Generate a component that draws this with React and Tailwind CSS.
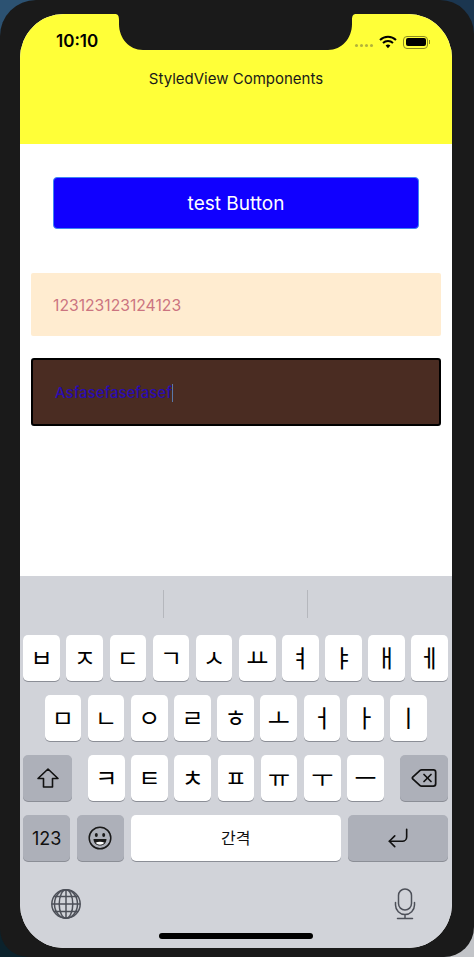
import { Delete, CornerDownLeft } from "lucide-react";

const row1 = ["ㅂ", "ㅈ", "ㄷ", "ㄱ", "ㅅ", "ㅛ", "ㅕ", "ㅑ", "ㅐ", "ㅔ"];
const row2 = ["ㅁ", "ㄴ", "ㅇ", "ㄹ", "ㅎ", "ㅗ", "ㅓ", "ㅏ", "ㅣ"];
const row3 = ["ㅋ", "ㅌ", "ㅊ", "ㅍ", "ㅠ", "ㅜ", "ㅡ"];

function Key({ label }) {
  return (
    <div className="w-[36.7px] h-[46px] flex items-center justify-center pb-[3px] bg-white rounded-[5px] shadow-[0_1px_0_#8b8e96] text-[24px] text-black">
      {label}
    </div>
  );
}

function GrayKey({ className, children }) {
  return (
    <div className={`h-[46px] flex items-center justify-center bg-[#adb0b9] rounded-[5px] shadow-[0_1px_0_#8b8e96] text-[#111] ${className}`}>
      {children}
    </div>
  );
}

function StatusIcons() {
  return (
    <div className="flex items-center">
      <div className="flex gap-[2px] mt-[6px] mr-[6px]">
        {[0, 1, 2, 3].map((i) => (
          <div key={i} className="w-[3px] h-[3px] rounded-full bg-[#b3b33a]" />
        ))}
      </div>
      <svg width="18" height="14" viewBox="0 0 18 14" className="mr-[6px]">
        <path d="M1 5a11.500 11.500 0 0 1 16 0" fill="none" stroke="#000" strokeWidth="2" />
        <path d="M4 8a7.200 7.200 0 0 1 10 0" fill="none" stroke="#000" strokeWidth="2" />
        <path d="M6.600 10.600a3.400 3.400 0 0 1 4.800 0L9 13.200z" fill="#000" />
      </svg>
      <div className="w-[25px] h-[13px] rounded-[4px] border border-[#8a8a20] p-[1.5px]">
        <div className="w-full h-full rounded-[2px] bg-black" />
      </div>
      <div className="w-[1px] h-[4px] ml-[1px] bg-[#8a8a20]" />
    </div>
  );
}

function EmojiIcon() {
  return (
    <svg width="24" height="24" viewBox="0 0 24 24">
      <circle cx="12" cy="12" r="10.800" fill="none" stroke="#1a1a1a" strokeWidth="1.500" />
      <ellipse cx="8.300" cy="9" rx="1.500" ry="2" fill="#1a1a1a" />
      <ellipse cx="15.700" cy="9" rx="1.500" ry="2" fill="#1a1a1a" />
      <path d="M5.500 13h13c0 3.800-2.800 6.500-6.500 6.500S5.500 16.800 5.500 13z" fill="#1a1a1a" />
      <path d="M7.500 16.800c2.500-1.300 6.500-1.300 9 0-1.200 1.200-2.800 1.900-4.500 1.900s-3.300-.7-4.500-1.900z" fill="#fff" />
    </svg>
  );
}

function GlobeIcon() {
  return (
    <svg width="32" height="32" viewBox="0 0 32 32" fill="none" stroke="#4d5059" strokeWidth="1.500">
      <circle cx="16" cy="16" r="14.200" />
      <ellipse cx="16" cy="16" rx="6.800" ry="14.200" />
      <ellipse cx="16" cy="16" rx="11.500" ry="14.200" />
      <path d="M16 1.800v28.400M1.800 16h28.400M4 8.500h24M4 23.500h24" />
    </svg>
  );
}

function MicIcon() {
  return (
    <svg width="24" height="32" viewBox="0 0 24 32" fill="none" stroke="#4d5059" strokeWidth="1.500" strokeLinecap="round">
      <rect x="5.500" y="1" width="13" height="21" rx="6.500" />
      <path d="M2.500 14.500v2.500a9.500 9.500 0 0 0 19 0v-2.500M12 26.500v4M4.500 30.500h15" />
    </svg>
  );
}

export default function App() {
  return (
    <div className="w-[474px] h-[957px] overflow-hidden bg-[conic-gradient(#1b3650_0_25%,#c2c4c8_25%_50%,#0b222c_50%_75%,#2c5272_75%_100%)] font-['Inter','Noto_Sans_CJK_KR',sans-serif]">
      <div className="w-[474px] h-[957px] pt-[14px] px-[20px] pb-[9px] bg-[#1a1a1a] rounded-tl-[36px] rounded-tr-[34px] rounded-bl-[28px] rounded-br-[30px]">
        <div className="relative flex flex-col w-[432px] h-[934px] overflow-hidden bg-white rounded-t-[44px] rounded-b-[44px]">

          {/* Notch */}
          <svg width="241" height="37" viewBox="0 0 241 37" className="absolute top-0 left-[95px]">
            <path d="M0 0h241c-3 0-4 2-4 6v4c0 14-10 26-24 26H28C14 36 4 24 4 10V6C4 2 3 0 0 0z" fill="#1a1a1a" />
          </svg>

          {/* Yellow header */}
          <div className="h-[130px] shrink-0 bg-[#ffff38]">
            <div className="flex items-center justify-between h-[30px] mt-[13px] pl-[36px] pr-[22px]">
              <span className="text-[17px] font-semibold text-black">10:10</span>
              <StatusIcons />
            </div>
            <p className="mt-[11px] text-center text-[15px] text-[#1a1a1a]">StyledView Components</p>
          </div>

          {/* Content */}
          <div className="flex-1 px-[11px] bg-white">
            <div className="flex items-center justify-center h-[52px] mt-[33px] mx-[22px] pt-[2px] rounded-[4px] bg-[#1000ff] border border-[#3f86f5] text-[19px] text-white">
              test Button
            </div>
            <div className="flex items-center h-[63px] mt-[44px] pt-[2px] pl-[22px] rounded-[2px] bg-[#ffecd0] text-[15.700px] text-[#cb7480]">
              123123123124123
            </div>
            <div className="flex items-center h-[68px] mt-[22px] pt-[2px] pl-[22px] rounded-[3px] bg-[#4a2c22] border-2 border-black text-[15px] font-medium text-[#2a0bb0]">
              Asfasefasefasef
              <span className="w-[1px] h-[18px] bg-[#5a78a8]" />
            </div>
          </div>

          {/* Keyboard */}
          <div className="relative h-[372px] shrink-0 bg-[#d1d3d9] font-['Noto_Sans_CJK_KR','Inter',sans-serif]">
            <div className="flex justify-center gap-[143px] pt-[14px] pr-[2px]">
              <div className="w-[1px] h-[28px] bg-[#b5b7bd]" />
              <div className="w-[1px] h-[28px] bg-[#b5b7bd]" />
            </div>
            <div className="flex flex-col gap-[14px] mt-[17px] pl-[3.300px] pr-[4px]">
              <div className="flex justify-between">
                {row1.map((k) => <Key key={k} label={k} />)}
              </div>
              <div className="flex justify-center gap-[6.500px]">
                {row2.map((k) => <Key key={k} label={k} />)}
              </div>
              <div className="flex justify-between">
                <GrayKey className="w-[48.500px]">
                  <svg width="24" height="22" viewBox="0 0 24 22" fill="none" stroke="#111" strokeWidth="1.600" strokeLinejoin="round">
                    <path d="M12 2 2 11.500h5.500V20h9v-8.500H22z" />
                  </svg>
                </GrayKey>
                <div className="flex gap-[6.500px]">
                  {row3.map((k) => <Key key={k} label={k} />)}
                </div>
                <GrayKey className="w-[48px]">
                  <Delete size={28} strokeWidth={1.500} />
                </GrayKey>
              </div>
              <div className="flex gap-[7px]">
                <GrayKey className="w-[46.700px] font-['Inter'] text-[18px]">123</GrayKey>
                <GrayKey className="w-[47px]">
                  <EmojiIcon />
                </GrayKey>
                <div className="flex-1 h-[46px] flex items-center justify-center pb-[3px] bg-white rounded-[5px] shadow-[0_1px_0_#8b8e96] text-[16px] text-[#111]">
                  간격
                </div>
                <GrayKey className="w-[100.500px]">
                  <CornerDownLeft size={26} strokeWidth={1.500} />
                </GrayKey>
              </div>
            </div>
            <div className="flex items-center justify-between mt-[27px] pl-[30px] pr-[35px]">
              <GlobeIcon />
              <MicIcon />
            </div>
            {/* Home indicator */}
            <div className="absolute bottom-[9px] left-[139px] w-[154px] h-[6px] rounded-full bg-black" />
          </div>
        </div>
      </div>
    </div>
  );
}
